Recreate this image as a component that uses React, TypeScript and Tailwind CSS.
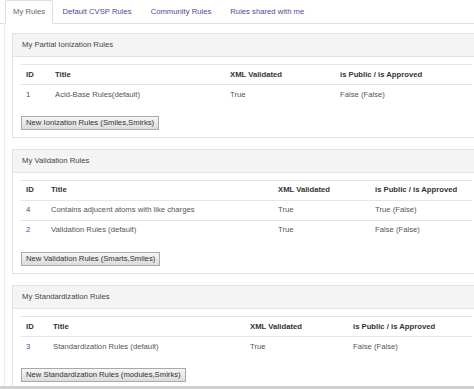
const tabs = ['My Rules', 'Default CVSP Rules', 'Community Rules', 'Rules shared with me'];

type Row = { id: string; title: string; xml: string; pub: string };

type Section = {
  heading: string;
  cols: [number, number, number];
  rows: Row[];
  button: string;
  gap: number;
};

const sections: Section[] = [
  {
    heading: 'My Partial Ionization Rules',
    cols: [29, 175, 110],
    rows: [{ id: '1', title: 'Acid-Base Rules(default)', xml: 'True', pub: 'False (False)' }],
    button: 'New Ionization Rules (Smiles,Smirks)',
    gap: 11,
  },
  {
    heading: 'My Validation Rules',
    cols: [25, 227, 97],
    rows: [
      { id: '4', title: 'Contains adjucent atoms with like charges', xml: 'True', pub: 'True (False)' },
      { id: '2', title: 'Validation Rules (default)', xml: 'True', pub: 'False (False)' },
    ],
    button: 'New Validation Rules (Smarts,Smiles)',
    gap: 12,
  },
  {
    heading: 'My Standardization Rules',
    cols: [27, 197, 103],
    rows: [{ id: '3', title: 'Standardization Rules (default)', xml: 'True', pub: 'False (False)' }],
    button: 'New Standardization Rules (modules,Smirks)',
    gap: 11,
  },
];

const Panel = ({ s }: { s: Section }) => (
  <div className="border border-[#e3e3e3] border-r-0 bg-white">
    <div className="h-[23px] flex items-center pl-[9px] bg-[#f4f4f4] border-b border-[#e3e3e3] text-[#444]">
      {s.heading}
    </div>
    <div className="pl-[8px] pt-[7px] pb-[7px]">
      <table className="table-fixed w-[451px] border-collapse">
        <colgroup>
          <col style={{ width: s.cols[0] }} />
          <col style={{ width: s.cols[1] }} />
          <col style={{ width: s.cols[2] }} />
          <col />
        </colgroup>
        <thead>
          <tr className="h-[20px] border-t border-[#e6e6e6]">
            <th className="text-left font-bold pl-[5px] text-[#333]">ID</th>
            <th className="text-left font-bold pl-[5px] text-[#333]">Title</th>
            <th className="text-left font-bold pl-[5px] text-[#333]">XML Validated</th>
            <th className="text-left font-bold pl-[5px] text-[#333]">is Public / is Approved</th>
          </tr>
        </thead>
        <tbody>
          {s.rows.map((r) => (
            <tr key={r.id} className="h-[20px] border-t border-[#e6e6e6]">
              <td className="pl-[5px] text-[#5b4494]">{r.id}</td>
              <td className="pl-[5px] text-[#555]">{r.title}</td>
              <td className="pl-[5px] text-[#555]">{r.xml}</td>
              <td className="pl-[5px] text-[#555]">{r.pub}</td>
            </tr>
          ))}
        </tbody>
      </table>
      <button
        style={{ marginTop: s.gap }}
        className="h-[14px] px-[4px] flex items-center border border-[#a9a9a9] bg-gradient-to-b from-[#f6f6f6] to-[#dcdcdc] text-[#333] leading-none"
      >
        {s.button}
      </button>
    </div>
  </div>
);

export default function App() {
  return (
    <div
      className="w-[474px] h-[389px] bg-white overflow-hidden flex flex-col text-[7.7px]"
      style={{ fontFamily: '"Liberation Sans", Arial, sans-serif' }}
    >
      <div className="flex-1 overflow-hidden">
        {/* Tabs */}
        <div className="h-[24px] flex items-end pl-[5px] border-b border-[#e0e0e0]">
          {tabs.map((t, i) =>
            i === 0 ? (
              <div
                key={t}
                className="h-[24px] -mb-px px-[7px] flex items-center border border-[#e0e0e0] border-b-white bg-white rounded-t-[2px] text-[#666]"
              >
                {t}
              </div>
            ) : (
              <div key={t} className="h-[23px] px-[9.5px] flex items-center text-[#5e3f93]">
                {t}
              </div>
            )
          )}
        </div>

        {/* Content */}
        <div className="ml-[4px] border-l border-[#ececec] pl-[7px] pt-[9px] flex flex-col gap-[11px]">
          {sections.map((s) => (
            <Panel key={s.heading} s={s} />
          ))}
        </div>
      </div>
      <div className="h-[3px] bg-[#cfcfcf]" />
    </div>
  );
}
